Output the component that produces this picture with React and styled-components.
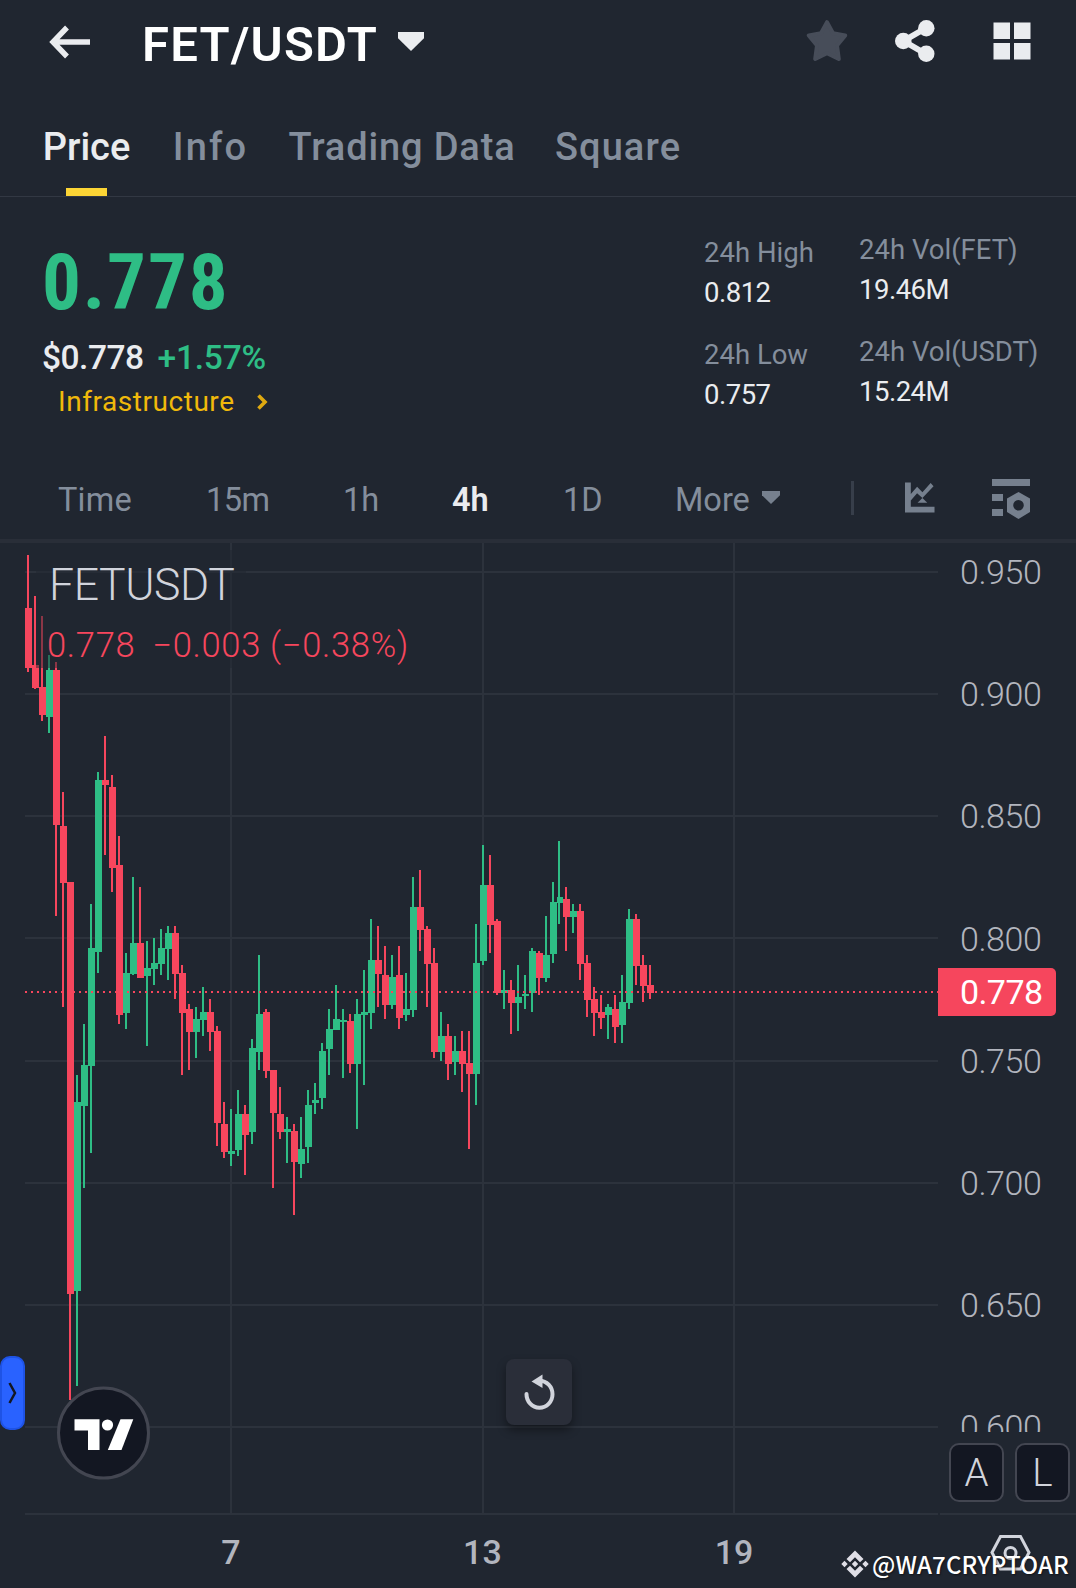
import React from "react";
import styled, { createGlobalStyle } from "styled-components";

const color = {
  bg: "#202630",
  line: "#2c323c",
  text: "#eaecef",
  muted: "#848e9c",
  up: "#2ebd85",
  down: "#f6465d",
  brand: "#f0b90b",
  axis: "#b2b5be",
  chartText: "#d1d4dc",
  panel: "#131722",
  panelBorder: "#434651",
};

const GlobalStyle = createGlobalStyle`
  * { box-sizing: border-box; }
  body { margin: 0; background: ${color.bg}; }
  svg { display: block; flex: none; }
`;

const Page = styled.main`
  position: relative;
  display: flex;
  flex-direction: column;
  width: 1076px;
  height: 1588px;
  overflow: hidden;
  background: ${color.bg};
  color: ${color.text};
  font-family: Roboto, "Liberation Sans", sans-serif;
  white-space: nowrap;
`;

/* ---------- header ---------- */

const Header = styled.header`
  display: flex;
  align-items: center;
  height: 83px;
  padding: 0 45px 0 49px;
`;

const Title = styled.h1`
  margin: 0 20px 0 51px;
  padding-top: 6px;
  font-size: 49px;
  line-height: 60px;
  font-weight: 600;
  letter-spacing: 1.2px;
  color: #fff;
`;

const Actions = styled.div`
  display: flex;
  align-items: center;
  gap: 47px;
  margin: 0 0 1px auto;
`;

const GridButton = styled.span`
  margin-left: 11px;
`;

const Tabs = styled.nav`
  display: flex;
  height: 114px;
  padding: 42px 0 0 42px;
  border-bottom: 1px solid #323843;
`;

const Tab = styled.div`
  display: flex;
  flex-direction: column;
  align-items: center;
  width: ${(p) => p.$width}px;
  margin-right: 41px;
  font-size: 38px;
  line-height: 44px;
  font-weight: 500;
  letter-spacing: ${(p) => p.$track}px;
  color: ${(p) => (p.$active ? color.text : color.muted)};

  &::after {
    content: "";
    width: 41px;
    height: 8px;
    margin-top: 19px;
    background: ${(p) => (p.$active ? "#fcd535" : "transparent")};
  }
`;

/* ---------- ticker ---------- */

const Ticker = styled.section`
  display: flex;
  justify-content: space-between;
  height: 263px;
  padding-left: 42px;
`;

const Quote = styled.div`
  display: flex;
  flex-direction: column;
  padding-top: 46px;
`;

const LastPrice = styled.div`
  font-size: 77px;
  line-height: 80px;
  font-weight: 700;
  font-stretch: 85%;
  letter-spacing: 1.9px;
  color: ${color.up};
`;

const QuoteRow = styled.div`
  display: flex;
  gap: 14px;
  margin-top: 15px;
  font-size: 33.5px;
  line-height: 40px;
  font-weight: 500;
  letter-spacing: -0.5px;
`;

const Change = styled.span`
  color: ${color.up};
  letter-spacing: -0.2px;
`;

const Category = styled.div`
  display: flex;
  align-items: center;
  gap: 22px;
  margin-top: 6px;
  padding-left: 16px;
  font-size: 28px;
  line-height: 36px;
  letter-spacing: 0.55px;
  color: ${color.brand};
`;

const Stats = styled.div`
  display: grid;
  grid-template-columns: 155px 217px;
`;

const StatColumn = styled.div`
  display: flex;
  flex-direction: column;
  gap: 22px;
  padding-top: ${(p) => p.$top}px;
`;

const Stat = styled.div`
  font-size: 27.5px;
  line-height: 40px;
`;

const StatLabel = styled.div`
  color: ${color.muted};
`;

const StatValue = styled.div`
  color: ${color.text};
  letter-spacing: -0.5px;
`;

/* ---------- timeframes ---------- */

const Timeframes = styled.nav`
  display: flex;
  align-items: center;
  height: 79px;
  padding: 0 46px 0 58px;
  font-size: 32.5px;
`;

const Frame = styled.span`
  width: ${(p) => p.$width}px;
  font-weight: ${(p) => (p.$active ? 600 : 400)};
  letter-spacing: ${(p) => p.$track || 0}px;
  color: ${(p) => (p.$active ? color.text : color.muted)};
`;

const MoreCaret = styled.span`
  margin-bottom: 4px;
`;

const Divider = styled.span`
  width: 3px;
  height: 34px;
  margin: 0 0 4px 71px;
  background: #373e4a;
`;

const ChartTools = styled.div`
  display: flex;
  align-items: flex-start;
  gap: 57px;
  margin: 0 0 1px auto;

  svg:first-child {
    margin-top: 3px;
  }
`;

/* ---------- chart ---------- */

const Chart = styled.section`
  position: relative;
  display: grid;
  grid-template-columns: 938px 138px;
  grid-template-rows: 972px 73px;
  border-top: 4px solid #292e38;
`;

const Legend = styled.div`
  position: absolute;
  top: 7px;
  left: 36px;
  display: flex;
  flex-direction: column;
  align-items: flex-start;
  font-weight: 300;
`;

const LegendSymbol = styled.div`
  height: 62px;
  width: 210px;
  padding-left: 13px;
  background: rgba(32, 38, 48, 0.5);
  font-size: 44.5px;
  line-height: 71px;
  letter-spacing: -0.4px;
  color: ${color.chartText};
`;

const LegendValues = styled.div`
  display: flex;
  gap: 17px;
  height: 56px;
  width: 377px;
  padding-left: 11px;
  background: rgba(32, 38, 48, 0.5);
  font-size: 34.5px;
  line-height: 66px;
  letter-spacing: 0.7px;
  color: ${color.down};
`;

const PriceAxis = styled.div`
  position: relative;
  display: flex;
  flex-direction: column;
  margin-left: 2px;
  border-bottom: 2px solid ${color.line};
`;

const PriceLabels = styled.div`
  height: 889px;
  overflow: hidden;
`;

const PriceLabel = styled.div`
  padding-left: 20px;
  font-size: 34px;
  font-weight: 350;
  line-height: 122.14px;
  letter-spacing: -0.45px;
  color: ${color.axis};

  &:first-child {
    margin-top: -31.8px;
  }
`;

const PriceTag = styled.div`
  position: absolute;
  top: 425px;
  left: -2px;
  width: 118px;
  height: 48px;
  padding-left: 22px;
  border-radius: 0 5px 5px 0;
  background: ${color.down};
  font-size: 34px;
  font-weight: 370;
  line-height: 48px;
  letter-spacing: -0.6px;
  color: #fff;
`;

const ScaleModes = styled.div`
  display: flex;
  gap: 11px;
  padding: 11px 0 0 9px;
`;

const ScaleButton = styled.button`
  width: 55px;
  height: 59px;
  padding: 0;
  border: 2px solid ${color.panelBorder};
  border-radius: 10px;
  background: ${color.panel};
  font: 340 38.5px/54px Roboto, "Liberation Sans", sans-serif;
  color: ${color.chartText};
`;

const TimeAxis = styled.div`
  display: flex;
  padding-left: 105px;
  font-size: 34px;
  line-height: 74px;
  font-weight: 500;
  color: ${color.axis};
`;

const TimeLabel = styled.span`
  width: 251.6px;
  text-align: center;
`;

const AxisSettings = styled.div`
  padding: 18px 0 0 52px;
`;

const Drawer = styled.button`
  position: absolute;
  top: 813px;
  left: 0;
  display: flex;
  align-items: center;
  justify-content: center;
  width: 25px;
  height: 74px;
  padding: 0;
  border: 2px solid #1e53e5;
  border-radius: 10px;
  background: #2962ff;
`;

const Brand = styled.div`
  position: absolute;
  top: 843px;
  left: 57px;
`;

const ResetButton = styled.button`
  position: absolute;
  top: 816px;
  left: 506px;
  display: flex;
  align-items: center;
  justify-content: center;
  width: 66px;
  height: 66px;
  padding: 0;
  border: 0;
  border-radius: 8px;
  background: #2a2e39;
  box-shadow: 0 5px 10px rgba(0, 0, 0, 0.4);
`;

const Watermark = styled.div`
  position: absolute;
  right: 7px;
  bottom: 8px;
  display: flex;
  align-items: center;
  gap: 3px;
  font-family: "Noto Sans CJK SC", "Noto Sans", sans-serif;
  font-size: 24px;
  font-weight: 500;
  line-height: 32px;
  letter-spacing: 0.15px;
  color: #fff;
  text-shadow: 1px 1px 2px rgba(0, 0, 0, 0.5);
`;

/* Each candle: direction, high, body top, body bottom, low (chart y units). */
const CANDLES = [
  ["r", 555, 608, 668, 672], ["r", 596, 665, 688, 689], ["r", 616, 687, 715, 721],
  ["g", 655, 670, 717, 733], ["r", 662, 670, 825, 916], ["r", 792, 826, 883, 1007],
  ["r", 882, 882, 1294, 1400], ["g", 1075, 1102, 1291, 1386], ["g", 1024, 1065, 1106, 1188],
  ["g", 904, 948, 1066, 1153], ["g", 772, 780, 952, 973], ["r", 736, 780, 785, 855],
  ["r", 775, 787, 868, 892], ["r", 836, 865, 1015, 1024], ["g", 953, 973, 1013, 1029],
  ["g", 877, 943, 974, 975], ["r", 887, 943, 978, 978], ["g", 941, 968, 976, 1046],
  ["g", 938, 963, 969, 985], ["g", 929, 948, 964, 975], ["g", 926, 933, 949, 980],
  ["r", 926, 933, 974, 999], ["r", 965, 973, 1013, 1075], ["r", 1004, 1009, 1032, 1070],
  ["g", 1007, 1019, 1032, 1058], ["g", 987, 1012, 1020, 1036], ["r", 999, 1012, 1032, 1051],
  ["r", 1026, 1031, 1123, 1146], ["r", 1102, 1124, 1152, 1158], ["g", 1109, 1151, 1154, 1166],
  ["g", 1090, 1114, 1150, 1156], ["r", 1105, 1114, 1135, 1175], ["g", 1039, 1048, 1132, 1144],
  ["g", 955, 1014, 1052, 1070], ["r", 1009, 1012, 1071, 1078], ["r", 1070, 1070, 1113, 1188],
  ["r", 1087, 1114, 1132, 1139], ["g", 1117, 1129, 1132, 1163], ["r", 1124, 1131, 1162, 1215],
  ["g", 1117, 1149, 1164, 1178], ["g", 1090, 1105, 1147, 1163], ["g", 1083, 1100, 1103, 1114],
  ["g", 1043, 1051, 1098, 1109], ["g", 1009, 1029, 1049, 1075], ["g", 985, 1019, 1030, 1030],
  ["g", 1009, 1020, 1022, 1078], ["r", 1014, 1021, 1064, 1073], ["g", 999, 1014, 1064, 1129],
  ["g", 970, 1012, 1015, 1085], ["g", 919, 960, 1013, 1029], ["r", 926, 960, 974, 1007],
  ["r", 946, 975, 1005, 1019], ["g", 955, 977, 1005, 1009], ["r", 946, 975, 1018, 1029],
  ["g", 973, 1009, 1015, 1021], ["g", 877, 907, 1010, 1017], ["r", 870, 907, 930, 951],
  ["r", 926, 929, 964, 1007], ["r", 948, 963, 1052, 1058], ["g", 1012, 1036, 1052, 1061],
  ["r", 1024, 1036, 1064, 1080], ["g", 1036, 1051, 1062, 1075], ["r", 1031, 1051, 1064, 1092],
  ["r", 1031, 1063, 1074, 1149], ["g", 924, 963, 1074, 1105], ["g", 845, 885, 961, 965],
  ["r", 855, 885, 925, 953], ["r", 919, 921, 993, 995], ["g", 970, 990, 993, 1009],
  ["r", 980, 990, 1003, 1034], ["g", 965, 997, 1003, 1031], ["g", 975, 994, 996, 1009],
  ["g", 948, 951, 993, 1012], ["r", 951, 953, 978, 995], ["g", 916, 955, 978, 982],
  ["g", 882, 902, 954, 963], ["g", 841, 897, 903, 924], ["r", 887, 899, 917, 951],
  ["g", 904, 911, 917, 933], ["r", 904, 911, 964, 980], ["r", 955, 963, 1000, 1017],
  ["r", 987, 999, 1013, 1036], ["r", 995, 1012, 1018, 1029], ["g", 1004, 1007, 1015, 1039],
  ["r", 995, 1009, 1027, 1043], ["g", 975, 1002, 1025, 1043], ["g", 909, 919, 1003, 1009],
  ["r", 914, 919, 966, 985], ["r", 955, 965, 986, 1002], ["r", 965, 985, 993, 999],
];

const NARROW_BAR = 76;

const GRID_ROWS = [571, 693, 815, 937, 1060, 1182, 1304, 1426];
const GRID_COLUMNS = [230, 482, 733];
const PRICES = ["0.950", "0.900", "0.850", "0.800", "0.750", "0.700", "0.650", "0.600"];

function CandleChart() {
  return (
    <svg width="938" height="972" viewBox="0 543 938 972" shapeRendering="crispEdges">
      {GRID_ROWS.map((y) => (
        <rect key={y} x="25" y={y} width="913" height="2" fill={color.line} />
      ))}
      {GRID_COLUMNS.map((x) => (
        <rect key={x} x={x} y="543" width="2" height="970" fill={color.line} />
      ))}
      <rect x="25" y="1513" width="913" height="2" fill={color.line} />
      {CANDLES.map(([dir, high, top, bottom, low], i) => {
        const narrow = i === NARROW_BAR;
        const x = 25 + 7 * i - (i > NARROW_BAR ? 1 : 0);
        return (
          <g key={i} fill={dir === "g" ? color.up : color.down}>
            <rect x={x + (narrow ? 1 : 2)} y={high} width="2" height={low - high} />
            <rect x={x} y={top} width={narrow ? 6 : 7} height={bottom - top} />
          </g>
        );
      })}
      <path d="M25 992H938" stroke={color.down} strokeWidth="2" strokeDasharray="2 4" />
    </svg>
  );
}

const BackIcon = () => (
  <svg width="42" height="34" viewBox="0 0 42 34" fill="none" stroke={color.text} strokeWidth="5.4">
    <path d="M4 17H41M18 2.5L4 17L18 31.5" />
  </svg>
);

const Caret = ({ width, height, fill }) => (
  <svg width={width} height={height} viewBox="0 0 26 20" preserveAspectRatio="none">
    <path d="M0 0H26V6.5L13 20L0 6.5Z" fill={fill} />
  </svg>
);

const StarIcon = () => (
  <svg width="42" height="42" viewBox="0 0 42 42">
    <path
      d="M21 2.2L27 13.3L39.2 15.4L31 25.4L32.8 39L21 33.3L9.2 39L11 25.4L2.8 15.4L15 13.3Z"
      fill="#474d59"
      stroke="#474d59"
      strokeWidth="4"
      strokeLinejoin="round"
    />
  </svg>
);

const ShareIcon = () => (
  <svg width="40" height="42" viewBox="0 0 40 42" fill={color.text}>
    <path d="M31 8L8.5 21L31 34" fill="none" stroke={color.text} strokeWidth="6" />
    <circle cx="8.3" cy="21" r="8.3" />
    <circle cx="31.3" cy="8.3" r="8.2" />
    <circle cx="31.3" cy="33.7" r="8.2" />
  </svg>
);

const GridIcon = () => (
  <svg width="38" height="38" viewBox="0 0 38 38" fill={color.text}>
    <path d="M.5 .5H17V17H.5ZM21 .5H37.5V17H21ZM.5 21H17V37.5H.5ZM21 21H37.5V37.5H21Z" />
  </svg>
);

const ChevronIcon = () => (
  <svg width="11" height="16" viewBox="0 0 11 16" fill="none" stroke="#dfa910" strokeWidth="3.6">
    <path d="M1.5 1.5L8 8L1.5 14.5" />
  </svg>
);

const LineChartIcon = () => (
  <svg width="30" height="31" viewBox="0 0 31 31" fill="#76808e">
    <path d="M0 0H6V12L12.5 4.5L18 10L26.5 .5L29.5 4L18 16L12.5 11L6 18.5V25H30.5V31H0Z" />
    <path d="M18 16L23 21H13Z" />
  </svg>
);

const IndicatorIcon = () => (
  <svg width="38" height="40" viewBox="0 0 38 40" fill="#76808e">
    <path d="M0 0H38V7H0ZM0 15H11V22H0ZM0 30H11V37H0Z" />
    <path
      fillRule="evenodd"
      d="M26.5 13L38 19.5V33L26.5 40L15 33V19.5ZM26.5 21A5.3 5.3 0 1 0 26.5 31.6A5.3 5.3 0 1 0 26.5 21Z"
    />
  </svg>
);

const BrandLogo = () => (
  <svg width="93" height="94" viewBox="0 0 93 94">
    <circle cx="46.5" cy="47" r="45" fill={color.panel} stroke={color.panelBorder} strokeWidth="3" />
    <g fill="#fff">
      <path d="M17.5 33.3H42.5V64H31V44.5H17.5Z" />
      <circle cx="50.5" cy="39" r="5.6" />
      <path d="M63.5 33.3H76.3L64.5 64H50.8Z" />
    </g>
  </svg>
);

const ResetIcon = () => (
  <svg width="32" height="36" viewBox="0 0 32 36">
    <path
      d="M3.5 20A13 13.5 0 1 0 16.5 6.7"
      fill="none"
      stroke={color.chartText}
      strokeWidth="4"
      strokeLinecap="round"
    />
    <path d="M8.5 7.5L19.5 .5V14Z" fill={color.chartText} />
  </svg>
);

const HexIcon = () => (
  <svg width="41" height="38" viewBox="0 0 41 38" fill="none" stroke={color.chartText} strokeWidth="3">
    <path d="M10.5 3.5H30.5L39 19.5L30.5 36H10.5L2 19.5Z" />
    <circle cx="20.5" cy="20" r="5.5" />
  </svg>
);

const ExchangeLogo = () => (
  <svg width="28" height="28" viewBox="0 0 28 28" fill="#dfdee6">
    <path d="M14 .5L22.5 9L19 12.3L14 7.3L9 12.3L5.5 9Z" />
    <path d="M14 27.5L5.5 19L9 15.7L14 20.7L19 15.7L22.5 19Z" />
    <path d="M14 10.8L17.2 14L14 17.2L10.8 14ZM3.5 10.8L6.7 14L3.5 17.2L.3 14ZM24.5 10.8L27.7 14L24.5 17.2L21.3 14Z" />
  </svg>
);

export default function App() {
  return (
    <>
      <GlobalStyle />
      <Page>
        <Header>
          <BackIcon />
          <Title>FET/USDT</Title>
          <Caret width={26} height={19} fill={color.text} />
          <Actions>
            <StarIcon />
            <ShareIcon />
            <GridButton>
              <GridIcon />
            </GridButton>
          </Actions>
        </Header>

        <Tabs>
          <Tab $active $width={89} $track={0}>Price</Tab>
          <Tab $width={77} $track={2.1}>Info</Tab>
          <Tab $width={224} $track={0.85}>Trading Data</Tab>
          <Tab $width={126} $track={1.1}>Square</Tab>
        </Tabs>

        <Ticker>
          <Quote>
            <LastPrice>0.778</LastPrice>
            <QuoteRow>
              <span>$0.778</span>
              <Change>+1.57%</Change>
            </QuoteRow>
            <Category>
              Infrastructure
              <ChevronIcon />
            </Category>
          </Quote>
          <Stats>
            <StatColumn $top={36}>
              <Stat>
                <StatLabel>24h High</StatLabel>
                <StatValue>0.812</StatValue>
              </Stat>
              <Stat>
                <StatLabel>24h Low</StatLabel>
                <StatValue>0.757</StatValue>
              </Stat>
            </StatColumn>
            <StatColumn $top={33}>
              <Stat>
                <StatLabel>24h Vol(FET)</StatLabel>
                <StatValue>19.46M</StatValue>
              </Stat>
              <Stat>
                <StatLabel>24h Vol(USDT)</StatLabel>
                <StatValue>15.24M</StatValue>
              </Stat>
            </StatColumn>
          </Stats>
        </Ticker>

        <Timeframes>
          <Frame $width={148} $track={0.2}>Time</Frame>
          <Frame $width={137} $track={-0.5}>15m</Frame>
          <Frame $width={109}>1h</Frame>
          <Frame $width={111} $active>4h</Frame>
          <Frame $width={112}>1D</Frame>
          <Frame $width={87}>More</Frame>
          <MoreCaret>
            <Caret width={18} height={13} fill="#76808e" />
          </MoreCaret>
          <Divider />
          <ChartTools>
            <LineChartIcon />
            <IndicatorIcon />
          </ChartTools>
        </Timeframes>

        <Chart>
          <CandleChart />
          <PriceAxis>
            <PriceLabels>
              {PRICES.map((p) => (
                <PriceLabel key={p}>{p}</PriceLabel>
              ))}
            </PriceLabels>
            <ScaleModes>
              <ScaleButton>A</ScaleButton>
              <ScaleButton>L</ScaleButton>
            </ScaleModes>
            <PriceTag>0.778</PriceTag>
          </PriceAxis>
          <TimeAxis>
            <TimeLabel>7</TimeLabel>
            <TimeLabel>13</TimeLabel>
            <TimeLabel>19</TimeLabel>
          </TimeAxis>
          <AxisSettings>
            <HexIcon />
          </AxisSettings>
          <Legend>
            <LegendSymbol>FETUSDT</LegendSymbol>
            <LegendValues>
              <span>0.778</span>
              <span>−0.003 (−0.38%)</span>
            </LegendValues>
          </Legend>
          <Drawer>
            <svg width="9" height="22" viewBox="0 0 9 22" fill="none" stroke={color.panel} strokeWidth="2.5">
              <path d="M1.5 1L7 11L1.5 21" />
            </svg>
          </Drawer>
          <Brand>
            <BrandLogo />
          </Brand>
          <ResetButton>
            <ResetIcon />
          </ResetButton>
        </Chart>

        <Watermark>
          <ExchangeLogo />
          @WA7CRYPTOAR
        </Watermark>
      </Page>
    </>
  );
}
